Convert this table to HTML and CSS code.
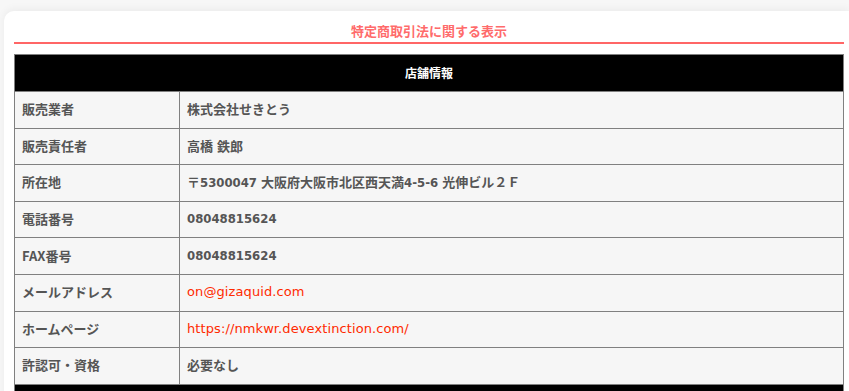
FILE: index.html
```html
<!DOCTYPE html>
<html lang="ja">
<head>
<meta charset="utf-8">
<title>特定商取引法に関する表示</title>
<link rel="stylesheet" href="styles.css">
</head>
<body>
<main class="card">
  <h1 class="page-title">特定商取引法に関する表示</h1>
  <table class="info-table">
    <tr><th colspan="2" class="head">店舗情報</th></tr>
    <tr><td class="label">販売業者</td><td>株式会社せきとう</td></tr>
    <tr><td class="label">販売責任者</td><td>高橋 鉄郎</td></tr>
    <tr><td class="label">所在地</td><td>〒5300047 大阪府大阪市北区西天満4-5-6 光伸ビル２Ｆ</td></tr>
    <tr><td class="label">電話番号</td><td>08048815624</td></tr>
    <tr><td class="label">FAX番号</td><td>08048815624</td></tr>
    <tr><td class="label">メールアドレス</td><td><a class="link" href="#">on@gizaquid.com</a></td></tr>
    <tr><td class="label">ホームページ</td><td><a class="link" href="#">https://nmkwr.devextinction.com/</a></td></tr>
    <tr><td class="label">許認可・資格</td><td>必要なし</td></tr>
    <tr><th colspan="2" class="head"></th></tr>
  </table>
</main>
</body>
</html>
```

FILE: styles.css
```css
html, body {
  margin: 0;
  padding: 0;
}

body {
  background: #f7f7f7;
  font-family: "DejaVu Sans Condensed", "Noto Sans CJK JP", sans-serif;
  color: #555;
  overflow: hidden;
}

.card {
  margin: 11px 0 0 4px;
  padding: 0 5px 20px 10px;
  background: #fff;
  border-radius: 10px 0 0 0;
  box-shadow: 0 -2px 8px rgba(0, 0, 0, 0.05);
}

.page-title {
  margin: 0;
  height: 31px;
  line-height: 39px;
  text-align: center;
  font-family: "Noto Sans CJK JP", sans-serif;
  font-size: 13px;
  font-weight: 700;
  color: #ff6b6b;
  border-bottom: 2px solid #ff6666;
  box-sizing: content-box;
}

.info-table {
  width: 100%;
  margin-top: 10px;
  border-collapse: collapse;
  font-size: 13px;
}

.info-table th,
.info-table td {
  border: 1px solid #808080;
  height: 36.6px;
  padding: 0 7px 2px;
  box-sizing: border-box;
  text-align: left;
  font-weight: 700;
  background: #f6f6f6;
}

.info-table .head {
  height: 37px;
  background: #000;
  color: #fff;
  text-align: center;
  font-family: "Noto Sans CJK JP", sans-serif;
  font-size: 12px;
}

.info-table .label {
  width: 165px;
  font-family: "Noto Sans CJK JP", sans-serif;
}

.link {
  font-family: "DejaVu Sans", sans-serif;
  color: #ff2a00;
  text-decoration: none;
  font-weight: 400;
  letter-spacing: 0.1px;
}
```
